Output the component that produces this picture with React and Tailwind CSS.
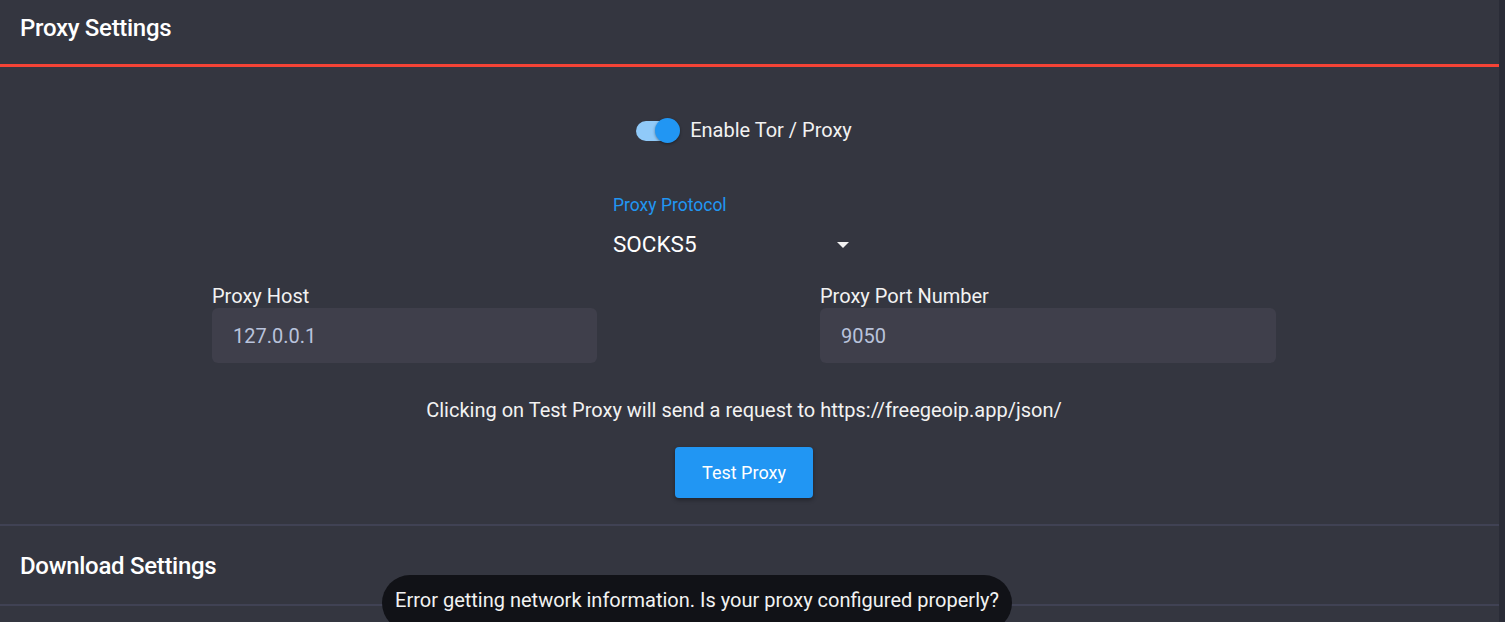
function Toggle() {
  return (
    <div className="relative w-[44px] h-[25px] flex items-center">
      <span className="block w-[40px] h-[20px] rounded-full bg-[#90caf9] mt-[2px]"></span>
      <span className="absolute right-0 top-0 w-[25px] h-[25px] rounded-full bg-[#2196f3] shadow-[0_1px_3px_rgba(0,0,0,0.4)]"></span>
    </div>
  );
}

function Field({ label, value, width }) {
  return (
    <div className={`flex flex-col ${width}`}>
      <label className="text-[20px] leading-[24px] text-[#f2f2f2]">{label}</label>
      <div className="h-[55px] rounded-[6px] bg-[#3f3f4b] flex items-center px-[21px] text-[20px] text-[#b9c3dc]">
        {value}
      </div>
    </div>
  );
}

export default function App() {
  return (
    <div className="w-[1505px] h-[622px] overflow-hidden flex bg-[#2a2c37] font-['Roboto',sans-serif] relative">
      <main className="w-[1499px] bg-[#343640] flex flex-col">
        <div className="h-[67px] flex items-start pt-[12px] px-[20px] border-b-[3px] border-[#f44336]">
          <h2 className="text-[24px] leading-[32px] font-medium text-white tracking-[-0.3px]">Proxy Settings</h2>
        </div>

        <section className="w-full pt-[49px] pb-[26px] border-b-2 border-[#404254]">
          <div className="w-[1488px] flex flex-col items-center">
            <div className="flex items-center gap-[10px] h-[28px]">
              <Toggle />
              <span className="text-[20px] leading-[28px] text-[#f2f2f2]">Enable Tor / Proxy</span>
            </div>

            <div className="mt-[51px] w-[262px] flex flex-col">
              <span className="text-[17.5px] leading-[20px] text-[#2196f3]">Proxy Protocol</span>
              <div className="flex items-center justify-between h-[40px] mt-[10px] pr-[26px]">
                <span className="text-[22.5px] text-white">SOCKS5</span>
                <svg width="12" height="7" viewBox="0 0 12 7"><path d="M0 0 L12 0 L6 6 Z" fill="#f2f2f2" /></svg>
              </div>
            </div>

            <div className="flex w-full mt-[19px]">
              <div className="w-[212px] shrink-0"></div>
              <Field label="Proxy Host" value="127.0.0.1" width="w-[385px]" />
              <div className="w-[223px] shrink-0"></div>
              <Field label="Proxy Port Number" value="9050" width="w-[456px]" />
            </div>

            <p className="mt-[33px] text-[20px] leading-[28px] text-[#f2f2f2]">
              Clicking on Test Proxy will send a request to https://freegeoip.app/json/
            </p>

            <button className="mt-[23px] w-[138px] h-[51px] rounded-[4px] bg-[#2196f3] text-white text-[18px] shadow-[0_2px_4px_rgba(0,0,0,0.35)]">
              Test Proxy
            </button>
          </div>
        </section>

        <div className="h-[80px] flex items-center px-[20px] border-b-2 border-[#404254]">
          <h2 className="text-[24px] leading-[32px] font-medium text-white tracking-[-0.3px] mt-[2px]">Download Settings</h2>
        </div>
      </main>

      <div className="absolute left-[382px] top-[575px] w-[630px] h-[56px] rounded-full bg-[#111217] flex items-start pt-[11px] justify-center">
        <span className="text-[20px] leading-[28px] text-[#f2f2f2]">
          Error getting network information. Is your proxy configured properly?
        </span>
      </div>
    </div>
  );
}
